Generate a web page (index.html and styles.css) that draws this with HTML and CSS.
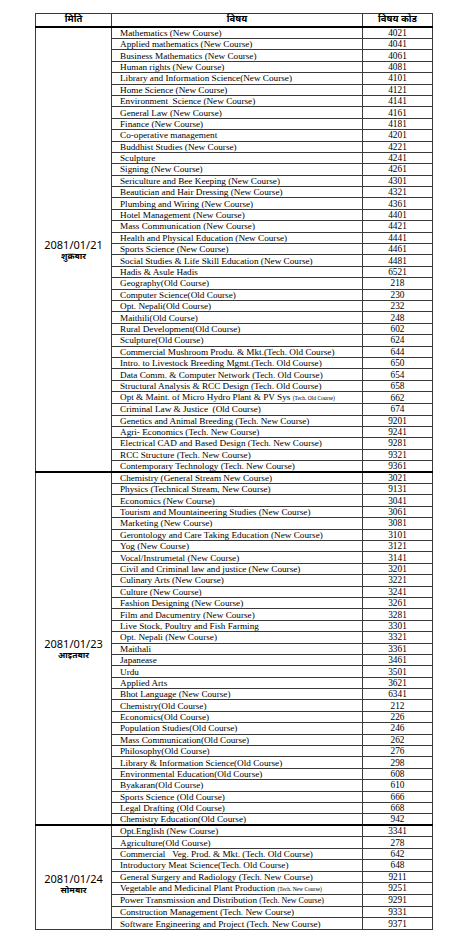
FILE: index.html
```html
<!DOCTYPE html>
<html lang="ne">
<head>
<meta charset="utf-8">
<title>Exam Routine</title>
<link rel="stylesheet" href="styles.css">
</head>
<body>
<div class="page">
<table class="routine">
<colgroup><col class="c-date"><col class="c-subj"><col class="c-code"></colgroup>
<thead>
<tr class="head"><th>मिति</th><th>विषय</th><th>विषय कोड</th></tr>
</thead>
<tbody class="block">
<tr><td class="date" rowspan="39"><div class="d">2081/01/21</div><div class="day">शुक्रबार</div></td><td class="subj">Mathematics (New Course)</td><td class="code">4021</td></tr>
<tr><td class="subj">Applied mathematics (New Course)</td><td class="code">4041</td></tr>
<tr><td class="subj">Business Mathematics (New Course)</td><td class="code">4061</td></tr>
<tr><td class="subj">Human rights (New Course)</td><td class="code">4081</td></tr>
<tr><td class="subj">Library and Information Science(New Course)</td><td class="code">4101</td></tr>
<tr><td class="subj">Home Science (New Course)</td><td class="code">4121</td></tr>
<tr><td class="subj">Environment  Science (New Course)</td><td class="code">4141</td></tr>
<tr><td class="subj">General Law (New Course)</td><td class="code">4161</td></tr>
<tr><td class="subj">Finance (New Course)</td><td class="code">4181</td></tr>
<tr><td class="subj">Co-operative management</td><td class="code">4201</td></tr>
<tr><td class="subj">Buddhist Studies (New Course)</td><td class="code">4221</td></tr>
<tr><td class="subj">Sculpture</td><td class="code">4241</td></tr>
<tr><td class="subj">Signing (New Course)</td><td class="code">4261</td></tr>
<tr><td class="subj">Sericulture and Bee Keeping (New Course)</td><td class="code">4301</td></tr>
<tr><td class="subj">Beautician and Hair Dressing (New Course)</td><td class="code">4321</td></tr>
<tr><td class="subj">Plumbing and Wiring (New Course)</td><td class="code">4361</td></tr>
<tr><td class="subj">Hotel Management (New Course)</td><td class="code">4401</td></tr>
<tr><td class="subj">Mass Communication (New Course)</td><td class="code">4421</td></tr>
<tr><td class="subj">Health and Physical Education (New Course)</td><td class="code">4441</td></tr>
<tr><td class="subj">Sports Science (New Course)</td><td class="code">4461</td></tr>
<tr><td class="subj">Social Studies &amp; Life Skill Education (New Course)</td><td class="code">4481</td></tr>
<tr><td class="subj">Hadis &amp; Asule Hadis</td><td class="code">6521</td></tr>
<tr><td class="subj">Geography(Old Course)</td><td class="code">218</td></tr>
<tr><td class="subj">Computer Science(Old Course)</td><td class="code">230</td></tr>
<tr><td class="subj">Opt. Nepali(Old Course)</td><td class="code">232</td></tr>
<tr><td class="subj">Maithili(Old Course)</td><td class="code">248</td></tr>
<tr><td class="subj">Rural Development(Old Course)</td><td class="code">602</td></tr>
<tr><td class="subj">Sculpture(Old Course)</td><td class="code">624</td></tr>
<tr><td class="subj">Commercial Mushroom Produ. &amp; Mkt.(Tech. Old Course)</td><td class="code">644</td></tr>
<tr><td class="subj">Intro. to Livestock Breeding Mgmt.(Tech. Old Course)</td><td class="code">650</td></tr>
<tr><td class="subj">Data Comm. &amp; Computer Network (Tech. Old Course)</td><td class="code">654</td></tr>
<tr><td class="subj">Structural Analysis &amp; RCC Design (Tech. Old Course)</td><td class="code">658</td></tr>
<tr><td class="subj">Opt &amp; Maint. of Micro Hydro Plant &amp; PV Sys <span class="tiny">(Tech. Old Course)</span></td><td class="code">662</td></tr>
<tr><td class="subj">Criminal Law &amp; Justice  (Old Course)</td><td class="code">674</td></tr>
<tr><td class="subj">Genetics and Animal Breeding (Tech. New Course)</td><td class="code">9201</td></tr>
<tr><td class="subj">Agri- Economics (Tech. New Course)</td><td class="code">9241</td></tr>
<tr><td class="subj">Electrical CAD and Based Design (Tech. New Course)</td><td class="code">9281</td></tr>
<tr><td class="subj">RCC Structure (Tech. New Course)</td><td class="code">9321</td></tr>
<tr><td class="subj">Contemporary Technology (Tech. New Course)</td><td class="code">9361</td></tr>
</tbody>
<tbody class="block">
<tr class="first"><td class="date" rowspan="31"><div class="d">2081/01/23</div><div class="day">आइतबार</div></td><td class="subj">Chemistry (General Stream New Course)</td><td class="code">3021</td></tr>
<tr><td class="subj">Physics (Technical Stream, New Course)</td><td class="code">9131</td></tr>
<tr><td class="subj">Economics (New Course)</td><td class="code">3041</td></tr>
<tr><td class="subj">Tourism and Mountaineering Studies (New Course)</td><td class="code">3061</td></tr>
<tr><td class="subj">Marketing (New Course)</td><td class="code">3081</td></tr>
<tr><td class="subj">Gerontology and Care Taking Education (New Course)</td><td class="code">3101</td></tr>
<tr><td class="subj">Yog (New Course)</td><td class="code">3121</td></tr>
<tr><td class="subj">Vocal/Instrumetal (New Course)</td><td class="code">3141</td></tr>
<tr><td class="subj">Civil and Criminal law and justice (New Course)</td><td class="code">3201</td></tr>
<tr><td class="subj">Culinary Arts (New Course)</td><td class="code">3221</td></tr>
<tr><td class="subj">Culture (New Course)</td><td class="code">3241</td></tr>
<tr><td class="subj">Fashion Designing (New Course)</td><td class="code">3261</td></tr>
<tr><td class="subj">Film and Dacumentry (New Course)</td><td class="code">3281</td></tr>
<tr><td class="subj">Live Stock, Poultry and Fish Farming</td><td class="code">3301</td></tr>
<tr><td class="subj">Opt. Nepali (New Course)</td><td class="code">3321</td></tr>
<tr><td class="subj">Maithali</td><td class="code">3361</td></tr>
<tr><td class="subj">Japanease</td><td class="code">3461</td></tr>
<tr><td class="subj">Urdu</td><td class="code">3501</td></tr>
<tr><td class="subj">Applied Arts</td><td class="code">3621</td></tr>
<tr><td class="subj">Bhot Language (New Course)</td><td class="code">6341</td></tr>
<tr><td class="subj">Chemistry(Old Course)</td><td class="code">212</td></tr>
<tr><td class="subj">Economics(Old Course)</td><td class="code">226</td></tr>
<tr><td class="subj">Population Studies(Old Course)</td><td class="code">246</td></tr>
<tr><td class="subj">Mass Communication(Old Course)</td><td class="code">262</td></tr>
<tr><td class="subj">Philosophy(Old Course)</td><td class="code">276</td></tr>
<tr><td class="subj">Library &amp; Information Science(Old Course)</td><td class="code">298</td></tr>
<tr><td class="subj">Environmental Education(Old Course)</td><td class="code">608</td></tr>
<tr><td class="subj">Byakaran(Old Course)</td><td class="code">610</td></tr>
<tr><td class="subj">Sports Science (Old Course)</td><td class="code">666</td></tr>
<tr><td class="subj">Legal Drafting (Old Course)</td><td class="code">668</td></tr>
<tr><td class="subj">Chemistry Education(Old Course)</td><td class="code">942</td></tr>
</tbody>
<tbody class="block">
<tr class="first"><td class="date low" rowspan="9"><div class="d">2081/01/24</div><div class="day">सोमबार</div></td><td class="subj">Opt.English (New Course)</td><td class="code">3341</td></tr>
<tr><td class="subj">Agriculture(Old Course)</td><td class="code">278</td></tr>
<tr><td class="subj">Commercial   Veg. Prod. &amp; Mkt. (Tech. Old Course)</td><td class="code">642</td></tr>
<tr><td class="subj">Introductory Meat Science(Tech. Old Course)</td><td class="code">648</td></tr>
<tr><td class="subj">General Surgery and Radiology (Tech. New Course)</td><td class="code">9211</td></tr>
<tr><td class="subj">Vegetable and Medicinal Plant Production <span class="tiny">(Tech. New Course)</span></td><td class="code">9251</td></tr>
<tr><td class="subj">Power Transmission and Distribution <span class="small">(Tech. New Course)</span></td><td class="code">9291</td></tr>
<tr><td class="subj">Construction Management (Tech. New Course)</td><td class="code">9331</td></tr>
<tr><td class="subj">Software Engineering and Project (Tech. New Course)</td><td class="code">9371</td></tr>
</tbody>
</table>
</div>
</body>
</html>
```
FILE: styles.css
```css
html, body {
  margin: 0;
  padding: 0;
  background: #fff;
}
.page {
  padding: 13px 0 0 35px;
}
.routine {
  border-collapse: collapse;
  table-layout: fixed;
  width: 397px;
  font-family: "Liberation Serif", "Times New Roman", serif;
  color: #000;
  border: 1px solid #555;
}
.c-date { width: 76px; }
.c-subj { width: 251px; }
.c-code { width: 70px; }

.routine th,
.routine td {
  padding: 0;
  border: 1px solid #3a3a3a;
}
.head th {
  height: 12px;
  font-family: "Noto Sans Devanagari", "Lohit Devanagari", "Noto Sans", sans-serif;
  font-weight: bold;
  font-size: 9.5px;
  line-height: 10px;
  text-align: center;
  vertical-align: middle;
  border-bottom: 2px solid #000;
}
.routine tbody tr {
  height: 11.4px;
}
.subj {
  font-size: 9.2px;
  line-height: 10px;
  padding-left: 8px !important;
  white-space: pre;
  overflow: hidden;
}
.code {
  font-size: 9.3px;
  line-height: 10px;
  text-align: center;
}
.tiny {
  font-size: 5.5px;
}
.small {
  font-size: 8px;
}
.date {
  text-align: center;
  vertical-align: middle;
}
.date .d {
  font-family: "Noto Sans", "Open Sans", sans-serif;
  font-size: 11px;
  line-height: 13px;
  color: #000;
}
.date .day {
  font-family: "Noto Sans Devanagari", "Lohit Devanagari", "Noto Sans", sans-serif;
  font-weight: bold;
  font-size: 8.5px;
  line-height: 11px;
}
.date.low {
  padding-top: 12px;
}
.block .first td {
  border-top: 2px solid #000;
}
```
